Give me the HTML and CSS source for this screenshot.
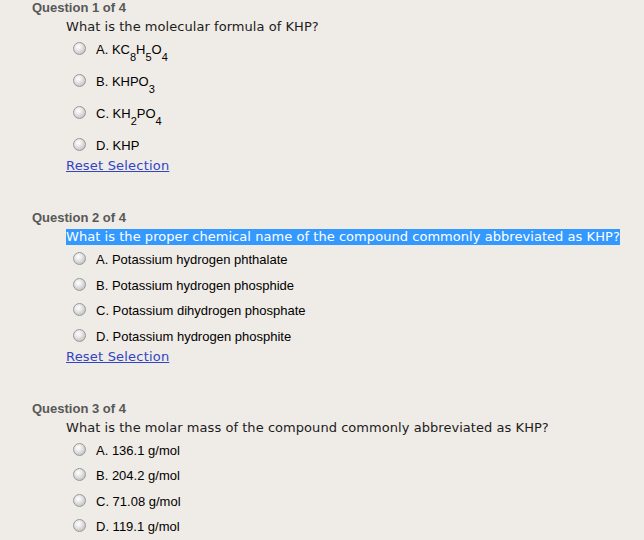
FILE: index.html
```html
<!DOCTYPE html>
<head>
	<link rel="stylesheet" href="styles.css">
</head>
<body>
	<div class="question">
		<div class="title">Question 1 of 4</div>
		<div class="body">
			<div class="text">What is the molecular formula of KHP?</div>
			<ul class="options">
				<li class="formula"><input type="radio" name="q1" id="q1a" /><label for="q1a">A. KC<sub>8</sub>H<sub>5</sub>O<sub>4</sub></label></li>
				<li class="formula"><input type="radio" name="q1" id="q1b" /><label for="q1b">B. KHPO<sub>3</sub></label></li>
				<li class="formula"><input type="radio" name="q1" id="q1c" /><label for="q1c">C. KH<sub>2</sub>PO<sub>4</sub></label></li>
				<li><input type="radio" name="q1" id="q1d" /><label for="q1d">D. KHP</label></li>
			</ul>
			<a href="#" class="reset">Reset Selection</a>
		</div>
	</div>

	<div class="question">
		<div class="title">Question 2 of 4</div>
		<div class="body">
			<div class="text"><span class="selected">What is the proper chemical name of the compound commonly abbreviated as KHP?</span></div>
			<ul class="options">
				<li><input type="radio" name="q2" id="q2a" /><label for="q2a">A. Potassium hydrogen phthalate</label></li>
				<li><input type="radio" name="q2" id="q2b" /><label for="q2b">B. Potassium hydrogen phosphide</label></li>
				<li><input type="radio" name="q2" id="q2c" /><label for="q2c">C. Potassium dihydrogen phosphate</label></li>
				<li><input type="radio" name="q2" id="q2d" /><label for="q2d">D. Potassium hydrogen phosphite</label></li>
			</ul>
			<a href="#" class="reset">Reset Selection</a>
		</div>
	</div>

	<div class="question">
		<div class="title">Question 3 of 4</div>
		<div class="body">
			<div class="text">What is the molar mass of the compound commonly abbreviated as KHP?</div>
			<ul class="options">
				<li><input type="radio" name="q3" id="q3a" /><label for="q3a">A. 136.1 g/mol</label></li>
				<li><input type="radio" name="q3" id="q3b" /><label for="q3b">B. 204.2 g/mol</label></li>
				<li><input type="radio" name="q3" id="q3c" /><label for="q3c">C. 71.08 g/mol</label></li>
				<li><input type="radio" name="q3" id="q3d" /><label for="q3d">D. 119.1 g/mol</label></li>
			</ul>
			<a href="#" class="reset">Reset Selection</a>
		</div>
	</div>
</body>
</html>
```

FILE: styles.css
```css
body {
	margin: 0;
	background: #efebe6;
	font-family: "Liberation Sans", Arial, sans-serif;
	font-size: 13px;
}

.question {
	padding: 0 0 0 32px;
	margin: 0 0 36px;
}

.title {
	font-weight: bold;
	line-height: 15px;
	color: #585858;
}

.body {
	padding: 0 0 0 34px;
}

.text, .reset {
	font-family: "DejaVu Sans", Verdana, sans-serif;
	font-size: 13px;
	line-height: 16px;
	letter-spacing: 0.05px;
}

.text {
	margin: 4px 0 0;
	color: #1c1c1c;
}

.selected {
	display: inline-block;
	background: #3399ff;
	color: #fff;
}

.options {
	list-style: none;
	margin: 1.5px 0 0;
	padding: 0;
}

.options li {
	display: flex;
	align-items: flex-start;
	padding: 5.5px 0 5px 7px;
	line-height: 15px;
	color: #000;
}

.options li.formula {
	padding-bottom: 11.5px;
}

input[type="radio"] {
	-webkit-appearance: none;
	appearance: none;
	width: 13px;
	height: 13px;
	margin: 0 10px 0 0;
	border: 1px solid #999;
	border-radius: 50%;
	background: radial-gradient(circle at 40% 35%, #fff 0, #ececec 30%, #c6c6c6 75%, #b0b0b0 100%);
	box-sizing: border-box;
	flex: none;
}

sub {
	font-size: 11px;
	line-height: 0;
	vertical-align: -7px;
}

.reset {
	display: inline-block;
	color: #3245c4;
	letter-spacing: 0.2px;
}
```
